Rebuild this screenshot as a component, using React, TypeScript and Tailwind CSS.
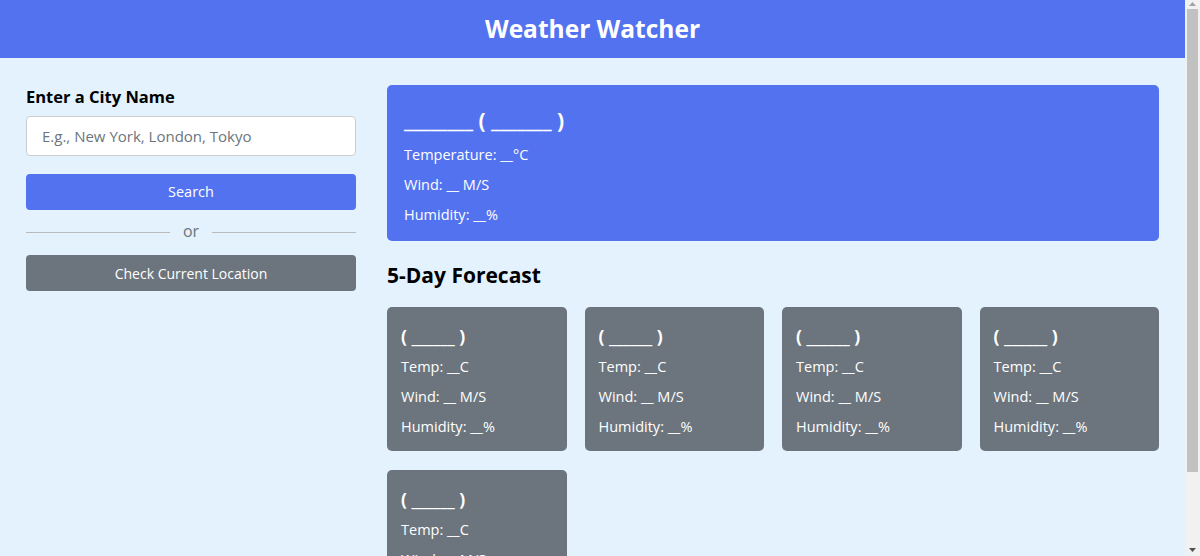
const forecastDays = [0, 1, 2, 3, 4];

function ForecastCard() {
  return (
    <li className="list-none rounded-[5px] bg-[#6C757D] px-[14px] pt-[17px] pb-[14px] text-white">
      <h3 className="text-[17.5px] font-bold leading-[24px]">( ______ )</h3>
      <h6 className="mt-[9px] text-[14.5px] font-medium leading-[20px]">Temp: __C</h6>
      <h6 className="mt-[10px] text-[14.5px] font-medium leading-[20px]">Wind: __ M/S</h6>
      <h6 className="mt-[10px] text-[14.5px] font-medium leading-[20px]">Humidity: __%</h6>
    </li>
  );
}

// the browser's scrollbar, as it shows in the screenshot
function Scrollbar() {
  return (
    <div className="flex h-full w-[15px] shrink-0 flex-col items-center bg-[#F1F1F1]">
      <svg width="15" height="8" viewBox="0 0 15 8" className="shrink-0">
        <path d="M4 6 L7.5 2 L11 6 Z" fill="#A3A3A3" />
      </svg>
      <div className="mt-[1px] h-[463px] w-[11px] bg-[#C1C1C1]" />
      <div className="flex-1" />
      <svg width="15" height="10" viewBox="0 0 15 10" className="shrink-0">
        <path d="M4 2 L11 2 L7.5 6 Z" fill="#505050" />
      </svg>
    </div>
  );
}

export default function App() {
  return (
    <div className="flex h-screen overflow-hidden bg-[#E3F2FD] font-['Open_Sans',sans-serif]">
      <div className="min-w-0 flex-1">
        <h1 className="flex h-[58px] items-center justify-center bg-[#5372F0] text-[24.5px] font-bold text-white">
          Weather Watcher
        </h1>
        <div className="flex gap-[31px] px-[26px] pt-[27px] pb-[18px]">
          <div className="w-[330px] shrink-0">
            <h3 className="text-[16.5px] font-bold leading-[24px] text-black">Enter a City Name</h3>
            <input
              type="text"
              placeholder="E.g., New York, London, Tokyo"
              className="mt-[7px] h-[40px] w-full rounded-[4px] border border-[#ccc] bg-white px-[15px] text-[15px] outline-none placeholder:text-[#6C757D]"
            />
            <button className="mt-[18px] h-[36px] w-full rounded-[4px] bg-[#5372F0] text-[14.5px] text-white">
              Search
            </button>
            <div className="my-[22px] flex h-px items-center justify-center bg-[#BBBBBB]">
              <span className="-mt-[3px] bg-[#E3F2FD] px-[13px] text-[16px] text-[#6C757D]">or</span>
            </div>
            <button className="h-[36px] w-full rounded-[4px] bg-[#6C757D] text-[14px] text-white">
              Check Current Location
            </button>
          </div>
          <div className="flex-1">
            <div className="rounded-[5px] bg-[#5372F0] px-[17px] pt-[20px] pb-[16px] text-white">
              <h2 className="text-[21px] font-bold leading-[30px]">________ ( _______ )</h2>
              <h6 className="mt-[10px] text-[14.5px] font-medium leading-[20px]">Temperature: __°C</h6>
              <h6 className="mt-[10px] text-[14.5px] font-medium leading-[20px]">Wind: __ M/S</h6>
              <h6 className="mt-[10px] text-[14.5px] font-medium leading-[20px]">Humidity: __%</h6>
            </div>
            <h2 className="mt-[19px] mb-[17px] text-[21px] font-bold leading-[30px] text-black">5-Day Forecast</h2>
            <ul className="grid grid-cols-4 gap-x-[18px] gap-y-[19px]">
              {forecastDays.map((d) => (
                <ForecastCard key={d} />
              ))}
            </ul>
          </div>
        </div>
      </div>
      <Scrollbar />
    </div>
  );
}
